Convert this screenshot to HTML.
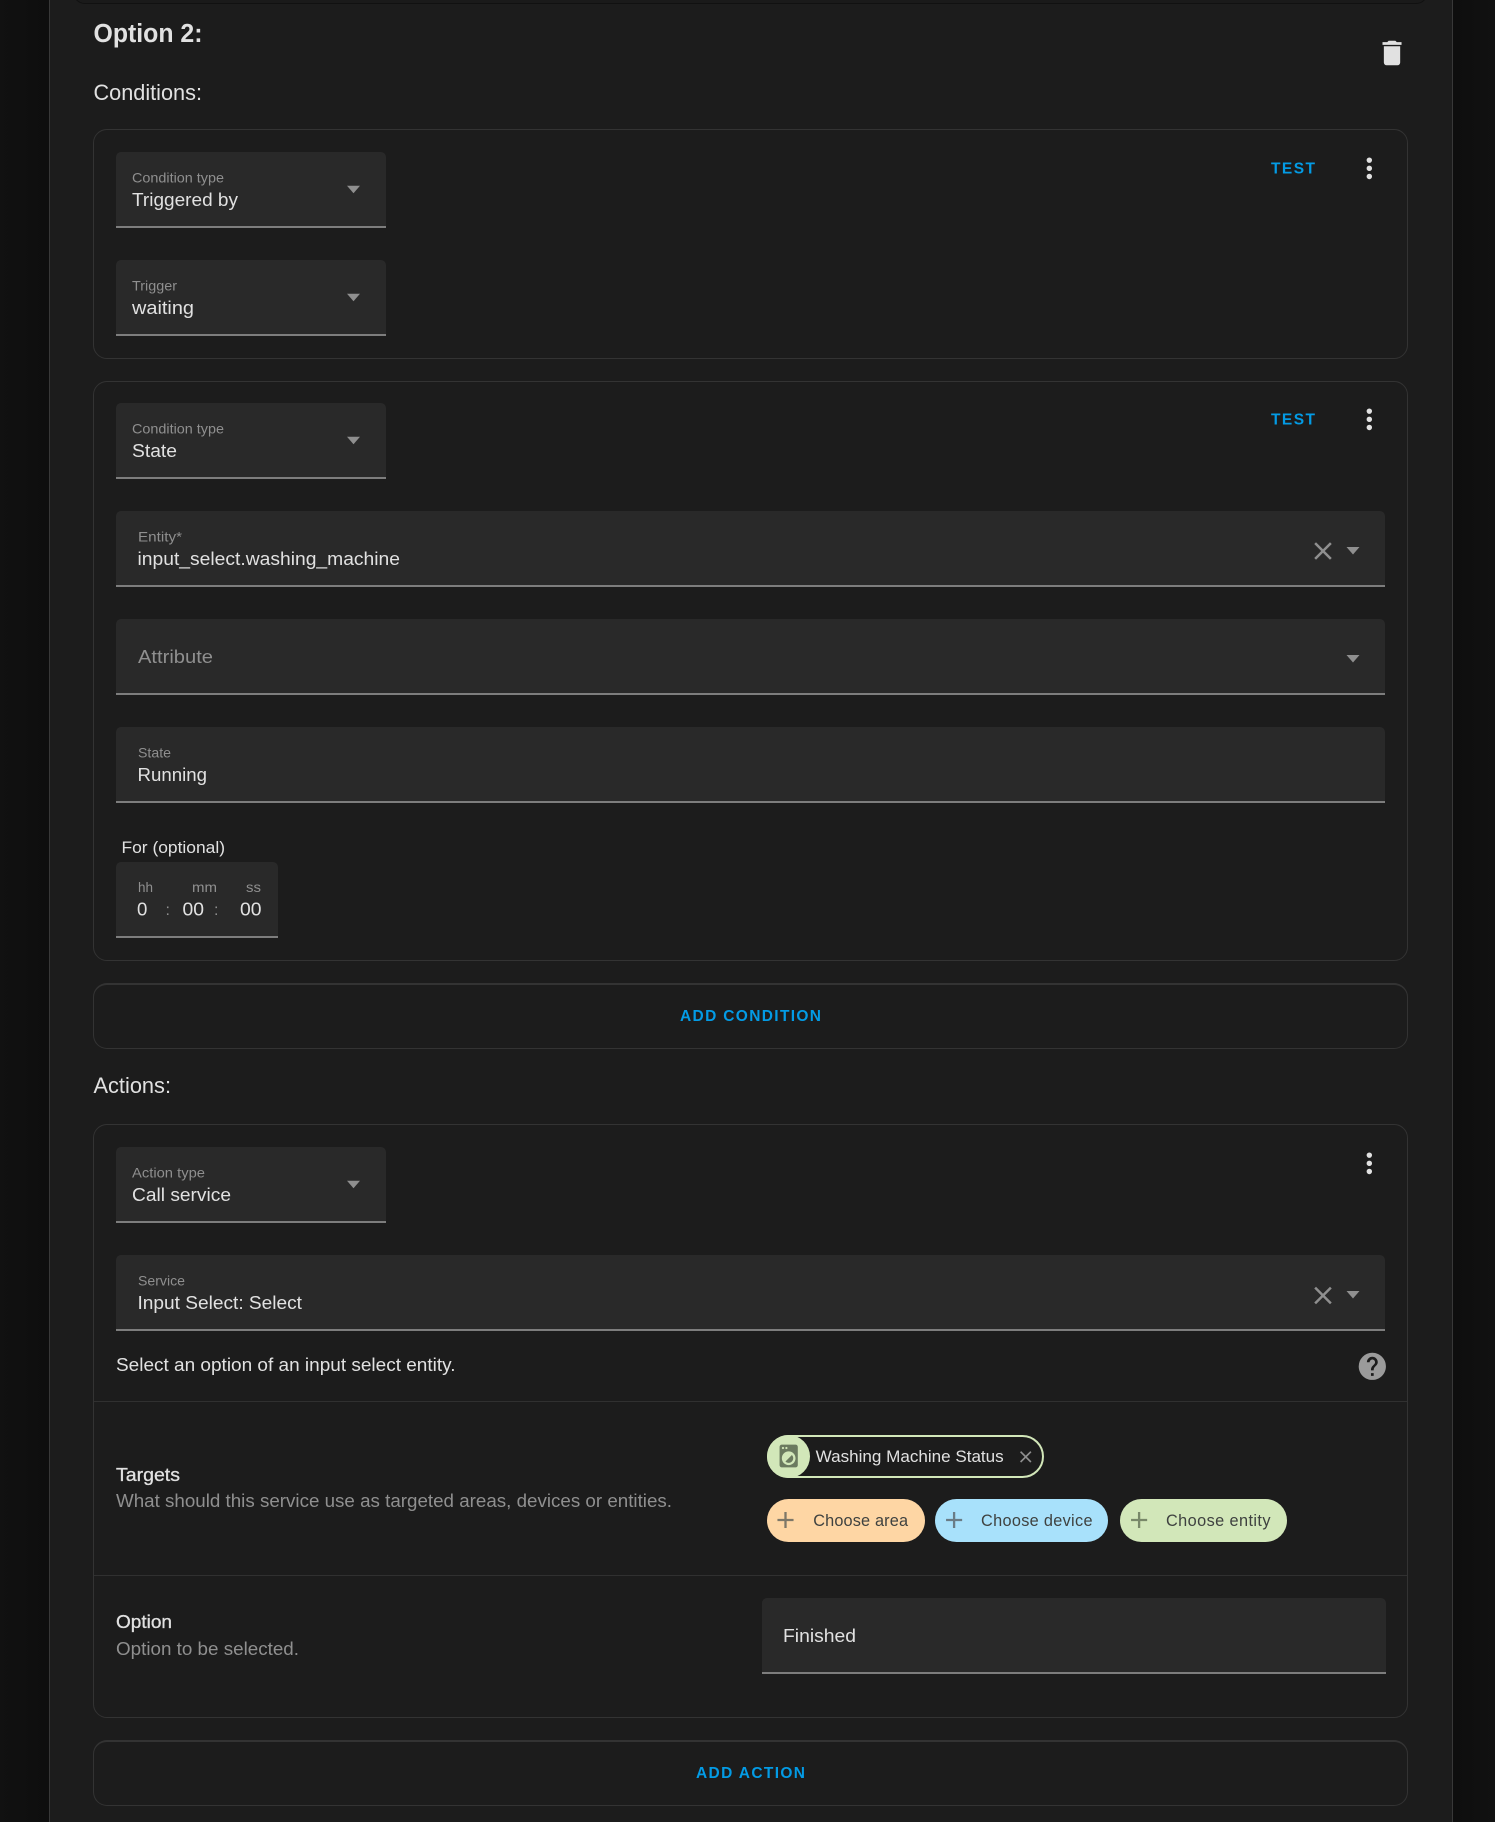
<!DOCTYPE html>
<html lang="en"><head><meta charset="utf-8"><title>Option 2</title>
<style>
html,body{margin:0;padding:0;background:#0e0e0e}
#p{position:relative;width:1495px;height:1822px;overflow:hidden;background:linear-gradient(90deg,#111 0,#0e0e0e 49px,#0e0e0e 1453px,#111 1495px)}
#p div{position:absolute;box-sizing:border-box}
.panel{left:49px;top:0;width:1404px;height:1822px;background:#1c1c1c;border-left:1px solid #383838;border-right:1px solid #383838}
.top{left:73px;top:-20px;width:1355px;height:24px;background:#1a1a1a;border:1px solid #111;border-radius:12px}
.card{left:93px;width:1315px;border:1px solid #333;border-radius:14px;background:#1c1c1c}
.add{border-top:2px solid #333}
.f{height:76px;background:#292929;border-bottom:2px solid #7d7d7d;border-radius:5px 5px 0 0}
.hr{left:94px;width:1313px;height:1px;background:#303030}
svg{position:absolute;left:0;top:0}
text{font-family:"Liberation Sans",sans-serif;font-size:18.6px;fill:#e1e1e1}
.l{font-size:14px;fill:#8f8f8f}
.b{font-weight:bold}
.m{stroke:#e1e1e1;stroke-width:.3px}
.g{fill:#8f8f8f}
.h{fill:#039be5;font-weight:bold;font-size:15.5px}
.d{fill:#3f4240;font-size:16.3px}
</style></head><body><div id="p">
<div class="panel"></div><div class="top"></div>
<div class="card" style="top:129px;height:230px"></div>
<div class="card" style="top:381px;height:580px"></div>
<div class="card add" style="top:983px;height:66px"></div>
<div class="card" style="top:1124px;height:594px"></div>
<div class="card add" style="top:1740px;height:66px"></div>
<div class="f" style="left:116px;top:152px;width:270px"></div>
<div class="f" style="left:116px;top:260px;width:270px"></div>
<div class="f" style="left:116px;top:403px;width:270px"></div>
<div class="f" style="left:116px;top:511px;width:1269px"></div>
<div class="f" style="left:116px;top:619px;width:1269px"></div>
<div class="f" style="left:116px;top:727px;width:1269px"></div>
<div class="f" style="left:116px;top:862px;width:162px"></div>
<div class="f" style="left:116px;top:1147px;width:270px"></div>
<div class="f" style="left:116px;top:1255px;width:1269px"></div>
<div class="f" style="left:762px;top:1598px;width:624px"></div>
<div class="hr" style="top:1401px"></div><div class="hr" style="top:1575px"></div>
<div style="left:767px;top:1435px;width:277px;height:43px;border:2px solid #d2e7b9;border-radius:22px"></div>
<div style="left:767px;top:1435px;width:43px;height:43px;background:#d2e7b9;border-radius:50%"></div>
<div style="left:767px;top:1499px;width:158px;height:43px;background:#fed6a4;border-radius:22px"></div>
<div style="left:935px;top:1499px;width:173px;height:43px;background:#a8e1fb;border-radius:22px"></div>
<div style="left:1120px;top:1499px;width:167px;height:43px;background:#d2e7b9;border-radius:22px"></div>
<svg width="1495" height="1822" viewBox="0 0 1495 1822" xmlns="http://www.w3.org/2000/svg">
<defs>
<path id="dots" d="M12,16A2,2 0 0,1 14,18A2,2 0 0,1 12,20A2,2 0 0,1 10,18A2,2 0 0,1 12,16M12,10A2,2 0 0,1 14,12A2,2 0 0,1 12,14A2,2 0 0,1 10,12A2,2 0 0,1 12,10M12,4A2,2 0 0,1 14,6A2,2 0 0,1 12,8A2,2 0 0,1 10,6A2,2 0 0,1 12,4Z"/>
<path id="close" d="M19,6.41L17.59,5L12,10.59L6.41,5L5,6.41L10.59,12L5,17.59L6.41,19L12,13.41L17.59,19L19,17.59L13.41,12L19,6.41Z"/>
<path id="plus" d="M19,13H13V19H11V13H5V11H11V5H13V11H19V13Z"/>
<path id="arr" d="M-6.5,-3.5H6.5L0,4Z"/>
</defs>
<text x="93.5" y="42" class="b" style="font-size:25.5px" textLength="109" lengthAdjust="spacingAndGlyphs">Option 2:</text>
<text x="93.5" y="100" style="font-size:22px" textLength="108.5" lengthAdjust="spacingAndGlyphs">Conditions:</text>
<path transform="translate(1375.7,36.7) scale(1.36)" fill="#e1e1e1" d="M19,4H15.5L14.5,3H9.5L8.5,4H5V6H19M6,19A2,2 0 0,0 8,21H16A2,2 0 0,0 18,19V7H6V19Z"/>

<text x="132" y="182.5" class="l" textLength="92" lengthAdjust="spacingAndGlyphs">Condition type</text>
<text x="132" y="206" textLength="106" lengthAdjust="spacingAndGlyphs">Triggered by</text>
<use href="#arr" x="353.5" y="189.3" fill="#8f8f8f"/>
<text x="132" y="290.5" class="l" textLength="45" lengthAdjust="spacingAndGlyphs">Trigger</text>
<text x="132" y="314" textLength="62" lengthAdjust="spacingAndGlyphs">waiting</text>
<use href="#arr" x="353.5" y="297.3" fill="#8f8f8f"/>
<text x="1271" y="173.5" class="h" textLength="44" lengthAdjust="spacing">TEST</text>
<use href="#dots" transform="translate(1353,152) scale(1.36)" fill="#e1e1e1"/>

<text x="132" y="433.5" class="l" textLength="92" lengthAdjust="spacingAndGlyphs">Condition type</text>
<text x="132" y="457" textLength="45" lengthAdjust="spacingAndGlyphs">State</text>
<use href="#arr" x="353.5" y="440.3" fill="#8f8f8f"/>
<text x="1271" y="424.5" class="h" textLength="44" lengthAdjust="spacing">TEST</text>
<use href="#dots" transform="translate(1353,403) scale(1.36)" fill="#e1e1e1"/>

<text x="138" y="541.7" class="l" textLength="44" lengthAdjust="spacingAndGlyphs">Entity*</text>
<text x="137.5" y="565" textLength="262.5" lengthAdjust="spacingAndGlyphs">input_select.washing_machine</text>
<use href="#close" transform="translate(1308,536) scale(1.25)" fill="#8f8f8f"/>
<use href="#arr" x="1353" y="550.5" fill="#8f8f8f"/>
<text x="138" y="663" class="g" textLength="75" lengthAdjust="spacingAndGlyphs">Attribute</text>
<use href="#arr" x="1353" y="658.5" fill="#8f8f8f"/>
<text x="138" y="757.7" class="l" textLength="33" lengthAdjust="spacingAndGlyphs">State</text>
<text x="137.5" y="781" textLength="69.5" lengthAdjust="spacingAndGlyphs">Running</text>

<text x="121.5" y="853" style="font-size:16.3px" textLength="103.5" lengthAdjust="spacingAndGlyphs">For (optional)</text>
<text x="138" y="892" class="l" textLength="15" lengthAdjust="spacingAndGlyphs">hh</text>
<text x="192" y="892" class="l" textLength="25" lengthAdjust="spacingAndGlyphs">mm</text>
<text x="246" y="892" class="l" textLength="15" lengthAdjust="spacingAndGlyphs">ss</text>
<text x="137" y="915.7">0</text>
<text x="165.5" y="915" class="g" style="font-size:16px">:</text>
<text x="182.5" y="915.7" textLength="21.5" lengthAdjust="spacingAndGlyphs">00</text>
<text x="214" y="915" class="g" style="font-size:16px">:</text>
<text x="240" y="915.7" textLength="21.5" lengthAdjust="spacingAndGlyphs">00</text>

<text x="680" y="1021" class="h" textLength="141" lengthAdjust="spacing">ADD CONDITION</text>
<text x="93.5" y="1093" style="font-size:22px" textLength="77.5" lengthAdjust="spacingAndGlyphs">Actions:</text>

<text x="132" y="1177.5" class="l" textLength="73" lengthAdjust="spacingAndGlyphs">Action type</text>
<text x="132" y="1201" textLength="99" lengthAdjust="spacingAndGlyphs">Call service</text>
<use href="#arr" x="353.5" y="1184.3" fill="#8f8f8f"/>
<use href="#dots" transform="translate(1353,1147) scale(1.36)" fill="#e1e1e1"/>

<text x="138" y="1285.7" class="l" textLength="47" lengthAdjust="spacingAndGlyphs">Service</text>
<text x="137.5" y="1309" textLength="164.5" lengthAdjust="spacingAndGlyphs">Input Select: Select</text>
<use href="#close" transform="translate(1308,1280.5) scale(1.25)" fill="#8f8f8f"/>
<use href="#arr" x="1353" y="1294.5" fill="#8f8f8f"/>

<text x="116" y="1371" textLength="339.5" lengthAdjust="spacingAndGlyphs">Select an option of an input select entity.</text>
<path transform="translate(1356,1350) scale(1.36)" fill="#9b9b9b" d="M15.07,11.25L14.17,12.17C13.45,12.89 13,13.5 13,15H11V14.5C11,13.39 11.45,12.39 12.17,11.67L13.41,10.41C13.78,10.05 14,9.55 14,9C14,7.89 13.1,7 12,7A2,2 0 0,0 10,9H8A4,4 0 0,1 12,5A4,4 0 0,1 16,9C16,9.88 15.64,10.67 15.07,11.25M13,19H11V17H13M12,2A10,10 0 0,0 2,12C2,17.53 6.47,22 12,22C17.53,22 22,17.53 22,12C22,6.47 17.53,2 12,2Z"/>

<text x="116" y="1481" class="m" textLength="64" lengthAdjust="spacingAndGlyphs">Targets</text>
<text x="116" y="1507" class="g" textLength="556" lengthAdjust="spacingAndGlyphs">What should this service use as targeted areas, devices or entities.</text>

<path transform="translate(775,1442.3) scale(1.14)" fill="#6b7a5f" d="M14.83,11.17C16.39,12.73 16.39,15.27 14.83,16.83C13.27,18.39 10.73,18.39 9.17,16.83L14.83,11.17M6,2H18C19.11,2 20,2.89 20,4V20C20,21.11 19.11,22 18,22H6C4.89,22 4,21.11 4,20V4C4,2.89 4.89,2 6,2M7,4C6.45,4 6,4.45 6,5C6,5.55 6.45,6 7,6C7.55,6 8,5.55 8,5C8,4.45 7.55,4 7,4M10,4C9.45,4 9,4.45 9,5C9,5.55 9.45,6 10,6C10.55,6 11,5.55 11,5C11,4.45 10.55,4 10,4M12,8C8.69,8 6,10.69 6,14C6,17.31 8.69,20 12,20C15.31,20 18,17.31 18,14C18,10.69 15.31,8 12,8Z"/>
<text x="815.7" y="1462" style="font-size:16.3px" textLength="188" lengthAdjust="spacingAndGlyphs">Washing Machine Status</text>
<use href="#close" transform="translate(1015.9,1447) scale(0.82)" fill="#8f8f8f"/>

<use href="#plus" transform="translate(771.7,1506.2) scale(1.15)" fill="#7d7768"/>
<text x="813.2" y="1526" class="d" textLength="94.8" lengthAdjust="spacing">Choose area</text>
<use href="#plus" transform="translate(940.3,1506.2) scale(1.15)" fill="#6a7c86"/>
<text x="981" y="1526" class="d" textLength="111.5" lengthAdjust="spacing">Choose device</text>
<use href="#plus" transform="translate(1125.3,1506.2) scale(1.15)" fill="#788869"/>
<text x="1166" y="1526" class="d" textLength="104.5" lengthAdjust="spacing">Choose entity</text>

<text x="116" y="1628" class="m" textLength="56" lengthAdjust="spacingAndGlyphs">Option</text>
<text x="116" y="1655" class="g" textLength="183" lengthAdjust="spacingAndGlyphs">Option to be selected.</text>
<text x="783" y="1642" textLength="73" lengthAdjust="spacingAndGlyphs">Finished</text>

<text x="696" y="1778" class="h" textLength="109" lengthAdjust="spacing">ADD ACTION</text>
</svg>
</div></body></html>
